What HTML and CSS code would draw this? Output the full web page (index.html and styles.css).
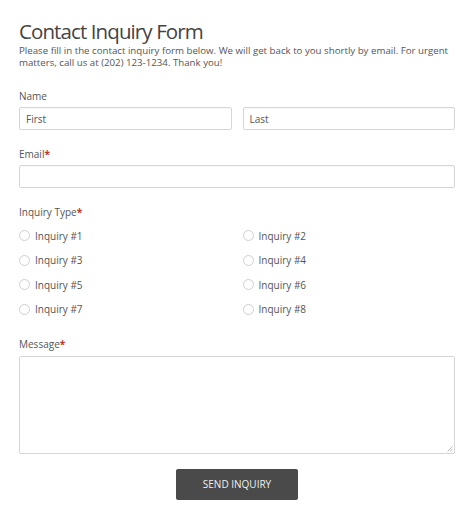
FILE: index.html
```html
<!DOCTYPE html>
<html>
<head>
<meta charset="utf-8">
<link rel="stylesheet" href="styles.css">
</head>
<body>
<form class="form">
  <h1 class="title">Contact Inquiry Form</h1>
  <p class="intro">Please fill in the contact inquiry form below. We will get back to you shortly by email. For urgent matters, call us at (202) 123-1234. Thank you!</p>

  <div class="field field-first">
    <div class="label">Name</div>
    <div class="two-col">
      <div class="input"><span class="ph">First</span></div>
      <div class="input"><span class="ph">Last</span></div>
    </div>
  </div>

  <div class="field">
    <div class="label">Email<span class="req">*</span></div>
    <div class="input"></div>
  </div>

  <div class="field">
    <div class="label">Inquiry Type<span class="req">*</span></div>
    <div class="radios">
      <div class="radio"><span class="circle"></span>Inquiry #1</div>
      <div class="radio"><span class="circle"></span>Inquiry #2</div>
      <div class="radio"><span class="circle"></span>Inquiry #3</div>
      <div class="radio"><span class="circle"></span>Inquiry #4</div>
      <div class="radio"><span class="circle"></span>Inquiry #5</div>
      <div class="radio"><span class="circle"></span>Inquiry #6</div>
      <div class="radio"><span class="circle"></span>Inquiry #7</div>
      <div class="radio"><span class="circle"></span>Inquiry #8</div>
    </div>
  </div>

  <div class="field field-msg">
    <div class="label">Message<span class="req">*</span></div>
    <div class="textarea">
      <svg class="grip" width="7" height="7" viewBox="0 0 7 7"><path d="M6.5 1.5 L1.5 6.5 M6.5 4 L4 6.5" stroke="#aaa" stroke-width="0.8" fill="none"/></svg>
    </div>
  </div>

  <div class="actions">
    <div class="button">SEND INQUIRY</div>
  </div>
</form>
</body>
</html>
```
FILE: styles.css
```css
html, body {
  margin: 0;
  padding: 0;
  background: #fff;
}
body {
  font-family: "Open Sans", "Liberation Sans", sans-serif;
  color: #555;
  font-size: 10px;
}
.form {
  padding: 19px 19px 0 19px;
}
.title {
  margin: 0;
  font-size: 20.5px;
  line-height: 25px;
  letter-spacing: -0.9px;
  font-weight: 400;
  color: #444;
}
.intro {
  margin: 1px 0 0 0;
  font-size: 9.7px;
  line-height: 12px;
  color: #555;
}
.field {
  margin-top: 16.8px;
}
.field-first {
  margin-top: 19.8px;
}
.field-msg {
  margin-top: 15.8px;
}
.label {
  font-size: 10px;
  line-height: 14px;
  margin-bottom: 4.4px;
  color: #555;
}
.req {
  color: #c0392b;
  font-weight: 700;
}
.two-col {
  display: grid;
  grid-template-columns: 1fr 1fr;
  column-gap: 11px;
}
.input {
  height: 23px;
  box-sizing: border-box;
  border: 1px solid #d6d6d6;
  border-radius: 2px;
  padding: 0 6px;
  display: flex;
  align-items: center;
  box-shadow: inset 0 1px 1px rgba(0,0,0,0.03);
}
.ph {
  font-size: 10px;
  color: #555;
  line-height: 14px;
  padding-top: 1px;
}
.radios {
  display: grid;
  grid-template-columns: 1fr 1fr;
  column-gap: 11px;
}
.radio {
  height: 24.5px;
  line-height: 24.5px;
  display: flex;
  align-items: center;
  font-size: 10px;
  color: #555;
}
.circle {
  width: 11px;
  height: 11px;
  box-sizing: border-box;
  border: 1px solid #cfcfcf;
  border-radius: 50%;
  margin-right: 5px;
  flex: none;
}
.textarea {
  position: relative;
  height: 98px;
  box-sizing: border-box;
  border: 1px solid #d6d6d6;
  border-radius: 2px;
}
.grip {
  position: absolute;
  right: 1px;
  bottom: 1px;
}
.actions {
  display: flex;
  justify-content: center;
  margin-top: 15px;
}
.button {
  width: 122px;
  height: 31px;
  background: #4a4a4a;
  color: #f0f0f0;
  border-radius: 2px;
  font-size: 10px;
  line-height: 31px;
  text-align: center;
}
```
